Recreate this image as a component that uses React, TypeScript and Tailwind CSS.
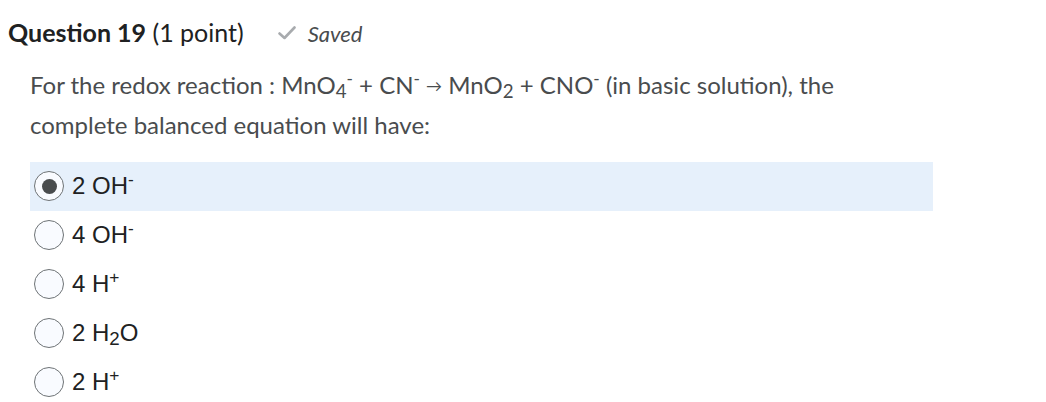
import React from 'react';

type Option = { id: string; label: React.ReactNode };

const Sup: React.FC<{ children: React.ReactNode }> = ({ children }) => (
    <span className="text-[0.72em] align-[0.5em] leading-none">{children}</span>
);
const Sub: React.FC<{ children: React.ReactNode }> = ({ children }) => (
    <span className="text-[0.78em] align-[-0.22em] leading-none">{children}</span>
);

const OPTIONS: Option[] = [
    { id: 'a', label: <>2 OH<Sup>-</Sup></> },
    { id: 'b', label: <>4 OH<Sup>-</Sup></> },
    { id: 'c', label: <>4 H<Sup>+</Sup></> },
    { id: 'd', label: <>2 H<Sub>2</Sub>O</> },
    { id: 'e', label: <>2 H<Sup>+</Sup></> },
];

const CheckIcon: React.FC = () => (
    <svg width="18" height="14" viewBox="0 0 18 14" fill="none" className="shrink-0">
        <path d="M1.5 7.5 L6.5 12 L16.5 1.5" stroke="#a8abae" strokeWidth="2.6" strokeLinecap="round" strokeLinejoin="round" />
    </svg>
);

const Radio: React.FC<{ checked: boolean }> = ({ checked }) => (
    <span className="w-[30px] h-[30px] rounded-full border border-[#6e7376] bg-[#f9fbff] flex items-center justify-center shrink-0">
        {checked && <span className="w-[15px] h-[15px] rounded-full bg-[#494c4e]" />}
    </span>
);

const App: React.FC = () => {
    const selected = 'a';

    return (
        <div className="w-[1046px] h-[402px] bg-white overflow-hidden font-['Lato',sans-serif]">
            <div className="flex items-center pl-[8px] pt-[17px] h-[32px] box-content">
                <h2 className="text-[25px] text-[#202122] whitespace-nowrap">
                    <span className="font-bold">Question 19</span> (1 point)
                </h2>
                <div className="flex items-center ml-[34px] gap-[12px]">
                    <CheckIcon />
                    <span className="italic text-[22px] text-[#494c4e]">Saved</span>
                </div>
            </div>

            <p className="mt-[16px] ml-[30px] text-[24px] leading-[39px] text-[#494c4e]">
                For the redox reaction : MnO<Sub>4</Sub><Sup>-</Sup> + CN<Sup>-</Sup>{' '}
                <span className="text-[16px] align-[0.15em]">→</span> MnO<Sub>2</Sub> + CNO<Sup>-</Sup> (in basic solution), the
                <br />
                complete balanced equation will have:
            </p>

            <div className="mt-[18px] ml-[30px] w-[903px] flex flex-col">
                {OPTIONS.map(opt => (
                    <label
                        key={opt.id}
                        className={`h-[49px] flex items-center pl-[4px] gap-[8px] ${selected === opt.id ? 'bg-[#e6f0fb]' : ''}`}
                    >
                        <Radio checked={selected === opt.id} />
                        <span className="font-['Liberation_Sans',Arial,sans-serif] text-[24px] text-[#202122]">{opt.label}</span>
                    </label>
                ))}
            </div>
        </div>
    );
};

export default App;
